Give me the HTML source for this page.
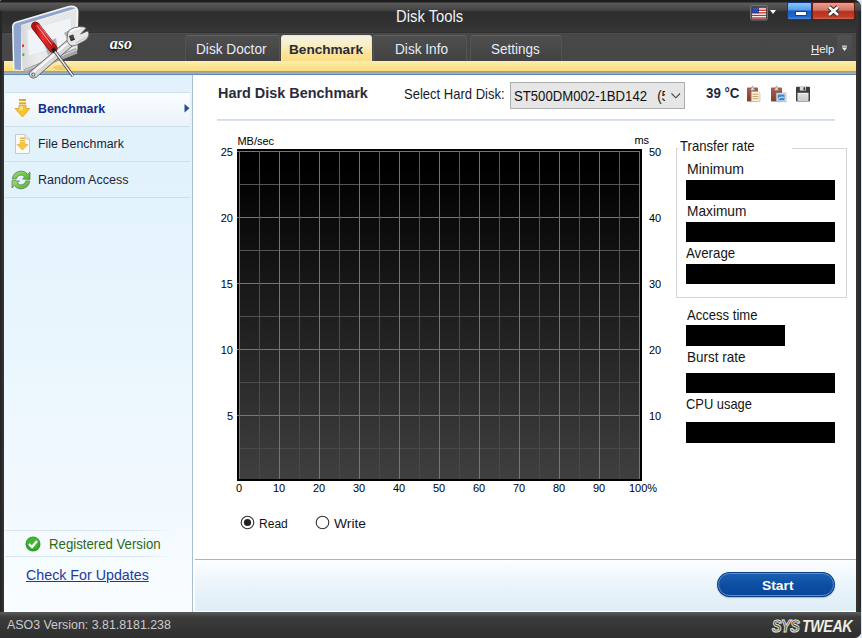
<!DOCTYPE html>
<html><head><meta charset="utf-8">
<style>
*{margin:0;padding:0;box-sizing:border-box}
html,body{width:862px;height:638px;overflow:hidden;background:#dce9f3;font-family:"Liberation Sans",sans-serif}
.a{position:absolute}
.t{position:absolute;white-space:nowrap;line-height:1}
#win{position:absolute;left:0;top:0;width:861px;height:638px;background:#333;border-radius:2px 7px 7px 0;overflow:hidden}
#title{left:0;top:0;width:861px;height:33px;background:linear-gradient(#1e1e1e 0,#1e1e1e 2px,#5a5a5a 3px,#444 10px,#2e2e2e 12px,#2f2f2f 20px,#383838 32px,#2c2c2c 33px)}
#tabrow{left:0;top:33px;width:861px;height:28px;background:linear-gradient(#505050 0,#484848 1px,#464646 28px)}
#yellow{left:4px;top:61px;width:852px;height:10px;background:linear-gradient(#fdeeb0,#f9dc7a)}
#gray{left:4px;top:71px;width:852px;height:3px;background:linear-gradient(#9a9a9a,#b0b0b0)}
#blue{left:4px;top:74px;width:852px;height:1px;background:#5d8cb9}
.tab{position:absolute;top:35px;height:26px;background:linear-gradient(#4f4f4f,#474747 60%,#424242);border:1px solid #535353;border-top-color:#606060;border-bottom:none;border-radius:3px 3px 0 0}
.tab.sel{background:linear-gradient(#f4f1e2,#f8efc8 35%,#fbe5a0 60%,#fadf84);border-color:#efe6c8}
.tabt{color:#e6ecf6;font-size:13.6px}
#side{left:4px;top:75px;width:188px;height:537px;background:linear-gradient(#e2f1fb 0,#e3f3fc 130px,#e8f5fd 250px,#eef8fe 350px,#f4fafe 455px,#fafdff 537px)}
#sideline{left:192px;top:75px;width:1px;height:537px;background:#a6bfd2}
#main{left:193px;top:75px;width:663px;height:537px;background:#fff}
#bottom{left:195px;top:560px;width:661px;height:51px;background:linear-gradient(#fdfeff,#eaf4fa 50%,#deedf7)}
#bline{left:195px;top:559px;width:661px;height:1px;background:#a9b4be}
#status{left:0;top:612px;width:861px;height:26px;background:linear-gradient(#5c5c5c,#3c3c3c 5px,#2e2e2e)}
.sep{position:absolute;left:5px;width:185px;height:1px;background:#cddfeb}
.stext{font-size:12.4px;color:#1f2236}
.lbl{font-size:13.1px;color:#151515}
.blk{position:absolute;background:#000}
.ax{font-size:11px;color:#000}
</style></head><body>
<div id="win">
<div id="title" class="a"></div><div id="tabrow" class="a"></div>
<div class="a" style="left:0;top:11px;width:2px;height:627px;background:#262626"></div><div class="a" style="left:2px;top:61px;width:2px;height:577px;background:#333"></div>
<div class="a" style="left:856px;top:11px;width:5px;height:627px;background:linear-gradient(90deg,#353535,#262626)"></div>
<div id="yellow" class="a"></div><div id="gray" class="a"></div><div id="blue" class="a"></div>
<div class="t" style="left:396.00px;top:8.69px;font-size:15.84px;transform:scaleX(0.9359);transform-origin:0 0;color:#eef2f8">Disk Tools</div>
<div class="tab" style="left:185px;width:95px"></div>
<div class="t" style="left:196.10px;top:42.24px;font-size:14.24px;transform:scaleX(0.9591);transform-origin:0 0;color:#e6ecf6">Disk Doctor</div>
<div class="tab sel" style="left:281px;width:91px"></div>
<div class="t" style="left:288.70px;top:42.53px;font-size:13.66px;transform:scaleX(0.9953);transform-origin:0 0;font-weight:bold;color:#2a2a3a">Benchmark</div>
<div class="tab" style="left:373px;width:94px"></div>
<div class="t" style="left:394.70px;top:42.24px;font-size:14.24px;transform:scaleX(0.9583);transform-origin:0 0;color:#e6ecf6">Disk Info</div>
<div class="tab" style="left:470px;width:92px"></div>
<div class="t" style="left:491.20px;top:42.24px;font-size:14.24px;transform:scaleX(0.9482);transform-origin:0 0;color:#e6ecf6">Settings</div>
<div class="a" style="left:837px;top:35px;width:15px;height:24px;border-radius:3px;background:linear-gradient(#555,#484848);opacity:.7"></div>
<div class="t" style="left:810.50px;top:43.63px;font-size:11.19px;transform:scaleX(1.0164);transform-origin:0 0;color:#f0f0f0"><u>H</u>elp</div>
<svg class="a" style="left:841px;top:45px" width="7" height="7"><rect x="1" y="0.6" width="5" height="1.1" fill="#eee"/><path d="M0.8 2.6 H6.2 L3.5 6 Z" fill="#eee"/></svg>
<svg class="a" style="left:749px;top:4px" width="20" height="17" viewBox="749 4 20 17">
<rect x="750.5" y="5.5" width="17" height="14.5" rx="1.5" fill="#4a4a4a" stroke="#727272"/>
<rect x="752" y="7" width="14" height="11.5" fill="#fff"/>
<rect x="752" y="7" width="14" height="1.3" fill="#d02828"/><rect x="752" y="9.6" width="14" height="1.3" fill="#d02828"/><rect x="752" y="12.2" width="14" height="1.3" fill="#d02828"/><rect x="752" y="14.8" width="14" height="1.3" fill="#d02828"/><rect x="752" y="17.3" width="14" height="1.2" fill="#d02828"/>
<rect x="752" y="7" width="7" height="6.2" fill="#283c90"/>
<path d="M753.5 8.3h.6M755.5 8.3h.6M757.5 8.3h.6M754.5 9.8h.6M756.5 9.8h.6M753.5 11.3h.6M755.5 11.3h.6M757.5 11.3h.6" stroke="#c8d0f0" stroke-width=".6"/>
</svg>
<svg class="a" style="left:770px;top:10px" width="7" height="5"><path d="M0 0H6L3 4Z" fill="#fff"/></svg>
<div class="a" style="left:787px;top:2px;width:25px;height:18px;border:1px solid #0c3a88;border-radius:2px;background:linear-gradient(#8ec4f6,#5aa0ec 40%,#1a5cc0 52%,#1f66c8 85%,#4a8ee0)"></div>
<div class="a" style="left:796px;top:11.5px;width:10px;height:3.5px;background:#fff;box-shadow:0 0 0 .6px #1a2a50"></div>
<div class="a" style="left:812px;top:2px;width:43px;height:18px;border:1px solid #6a1a10;border-radius:2px;background:linear-gradient(#e8a090,#d07464 45%,#b83420 52%,#c03c24 85%,#d06850)"></div>
<svg class="a" style="left:826px;top:5px" width="15" height="12"><path d="M3 2 L12 10 M12 2 L3 10" stroke="#2a2020" stroke-width="4.4"/><path d="M3 2 L12 10 M12 2 L3 10" stroke="#f8f8f8" stroke-width="2.8"/></svg>
<div id="side" class="a"></div><div id="sideline" class="a"></div><div id="main" class="a"></div>
<div id="bline" class="a"></div><div id="bottom" class="a"></div><div id="status" class="a"></div>
<div class="t" style="left:109.8px;top:36.36px;font-size:16px;font-family:'Liberation Serif',serif;font-weight:bold;font-style:italic;color:#fff;text-shadow:0 1px 2px #000">aso</div>
<div class="a" style="left:5px;top:93px;width:185px;height:33px;background:linear-gradient(#fafdff,#f3f9fd 45%,#e9f3fa)"></div>
<div class="sep" style="top:92px"></div>
<div class="sep" style="top:126px"></div>
<div class="sep" style="top:161px"></div>
<div class="sep" style="top:197px"></div>
<div class="t" style="left:37.80px;top:101.88px;font-size:13.37px;transform:scaleX(0.9223);transform-origin:0 0;font-weight:bold;color:#132c8e">Benchmark</div>
<svg class="a" style="left:184px;top:104px" width="6" height="9"><path d="M0.5 0 L5.5 4.2 L0.5 8.5Z" fill="#2d4a86"/></svg>
<div class="t" style="left:37.50px;top:138.30px;font-size:12.65px;transform:scaleX(0.9776);transform-origin:0 0;color:#1f2236">File Benchmark</div>
<div class="t" style="left:37.50px;top:174.20px;font-size:12.65px;transform:scaleX(0.9904);transform-origin:0 0;color:#1f2236">Random Access</div>
<svg class="a" style="left:14px;top:98px" width="17" height="20">
<rect x="5" y="1" width="7" height="2" fill="#e2a72a"/><rect x="5" y="4.3" width="7" height="1.7" fill="#e2a72a"/>
<path d="M5 7 H12 V10.5 H15.8 L8.5 19 L1 10.5 H5 Z" fill="#f6c632" stroke="#dca12a" stroke-width="0.8"/>
<path d="M6 8 H9 V12 L5 12Z" fill="#fde89a" opacity=".7"/>
</svg>
<svg class="a" style="left:15px;top:134px" width="15" height="20">
<path d="M0.5 0.5 H10 L14.5 5 V19.5 H0.5 Z" fill="#fafafa" stroke="#c8c8c8"/>
<path d="M10 0.5 V5 H14.5" fill="#e8e8e8" stroke="#c8c8c8"/>
<rect x="5" y="3.5" width="5" height="1.5" fill="#e6b040"/><rect x="5" y="6" width="5" height="1.4" fill="#e6b040"/>
<path d="M5 8.5 H10 V10.5 H13 L7.5 16 L2 10.5 H5 Z" fill="#f6c840" stroke="#e0a830" stroke-width="0.6"/>
</svg>
<svg class="a" style="left:0;top:160px" width="40" height="35" viewBox="0 160 40 35">
<defs><linearGradient id="grn" x1="0" y1="0" x2="1" y2="1"><stop offset="0" stop-color="#a6e07a"/><stop offset=".5" stop-color="#72cc44"/><stop offset="1" stop-color="#4cb02a"/></linearGradient></defs>
<path d="M12.3 179 A8.7 8.7 0 0 1 27.7 174.4 L30 172 L30 179.5 L22.5 179 L24.7 176.9 A4.8 4.8 0 0 0 16.2 179 Z" fill="url(#grn)" stroke="#5e6e5e" stroke-width=".7"/>
<path d="M29.7 181 A8.7 8.7 0 0 1 14.3 185.6 L12 188 L12 180.5 L19.5 181 L17.3 183.1 A4.8 4.8 0 0 0 25.8 181 Z" fill="url(#grn)" stroke="#5e6e5e" stroke-width=".7"/>
</svg>
<div class="sep" style="top:530px;width:168px;background:linear-gradient(90deg,#d5e6f2,#d5e6f2 80%,rgba(213,230,242,0))"></div><div class="sep" style="top:556px;width:168px;background:linear-gradient(90deg,#d5e6f2,#d5e6f2 80%,rgba(213,230,242,0))"></div>
<svg class="a" style="left:25px;top:536px" width="16" height="16">
<circle cx="8" cy="8" r="7.5" fill="#2ea02a"/><circle cx="8" cy="7" r="6" fill="#52c040" opacity=".6"/>
<path d="M4 8 L7 11 L12 5" stroke="#fff" stroke-width="2.3" fill="none"/></svg>
<div class="t" style="left:48.60px;top:537.32px;font-size:14.39px;transform:scaleX(0.9188);transform-origin:0 0;color:#2c6a12">Registered Version</div>
<div class="t" style="left:26.30px;top:568.43px;font-size:14.97px;transform:scaleX(0.9521);transform-origin:0 0;color:#1b3aa0"><u>Check For Updates</u></div>
<div class="t" style="left:6.50px;top:619.27px;font-size:12.79px;transform:scaleX(0.9690);transform-origin:0 0;color:#cccccc">ASO3 Version: 3.81.8181.238</div>
<div class="t" style="left:772px;top:618.03px;font-size:16.5px;font-weight:bold;font-style:italic;color:#f0ede4;transform:scaleX(0.86);transform-origin:0 0;letter-spacing:-0.4px"><span style="color:#3a3a3a;-webkit-text-stroke:1.1px #e6e2d8">SYS</span><span style="margin-left:3px">TWEAK</span></div>
<div class="t" style="left:217.90px;top:85.29px;font-size:15.19px;transform:scaleX(0.9494);transform-origin:0 0;font-weight:bold;color:#2b2b40">Hard Disk Benchmark</div>
<div class="t" style="left:403.70px;top:87.37px;font-size:14.10px;transform:scaleX(0.9246);transform-origin:0 0;color:#1a1a2a">Select Hard Disk:</div>
<div class="a" style="left:510px;top:82px;width:175px;height:27px;background:#e6e6e6;border:1px solid #adadad;overflow:hidden"></div>
<div class="a" style="left:514px;top:84px;width:151px;height:22px;overflow:hidden"><div class="t" style="left:0.4px;top:4.90px;font-size:14.3px;word-spacing:7px;color:#111;transform:scaleX(0.92);transform-origin:0 0">ST500DM002-1BD142 (5000</div></div>
<svg class="a" style="left:671px;top:93px" width="10" height="6"><path d="M0.5 0.5 L4.8 4.8 L9 0.5" stroke="#444" stroke-width="1.1" fill="none"/></svg>
<div class="a" style="left:217px;top:119px;width:618px;height:2px;background:linear-gradient(#cfd9e4,#dde6ee)"></div>
<div class="t" style="left:705.60px;top:87.09px;font-size:13.95px;transform:scaleX(0.9529);transform-origin:0 0;font-weight:bold;color:#1a2a48">39 °C</div>
<svg class="a" style="left:744px;top:84px" width="70" height="20" viewBox="744 84 70 20">
<defs><linearGradient id="brd" x1="0" y1="0" x2="0" y2="1"><stop offset="0" stop-color="#a8604e"/><stop offset="1" stop-color="#7e3e30"/></linearGradient>
<linearGradient id="flp" x1="0" y1="0" x2="0" y2="1"><stop offset="0" stop-color="#f4f4f4"/><stop offset="1" stop-color="#cfcfcf"/></linearGradient></defs>
<rect x="747" y="87.5" width="11" height="14" rx="0.8" fill="url(#brd)"/>
<path d="M750 90.2 L751.5 88.2 L752.5 85.8 L753.5 88.2 L755 90.2 Z" fill="#e8e8e8" stroke="#777" stroke-width=".5"/>
<path d="M751.3 91.5 H758.2 L760 93.3 V101.6 H751.3 Z" fill="#f7f2dc" stroke="#a8a8a8" stroke-width=".5"/>
<path d="M752.5 94.3H758.5M752.5 96.5H758.5M752.5 98.7H758.5" stroke="#c0a060" stroke-width=".9"/>
<rect x="771" y="87.5" width="11" height="14" rx="0.8" fill="url(#brd)"/>
<path d="M774 90.2 L775.5 88.2 L776.5 85.8 L777.5 88.2 L779 90.2 Z" fill="#e8e8e8" stroke="#777" stroke-width=".5"/>
<rect x="776.2" y="93" width="9.8" height="8.8" fill="#f2f2f2" stroke="#9a9a9a" stroke-width=".6"/>
<rect x="777.6" y="94.4" width="7" height="6" fill="#3d86d0"/>
<path d="M778 99.5 Q780 96 784 97.5" stroke="#bfe0ff" stroke-width="1.2" fill="none"/>
<rect x="796" y="86.8" width="14" height="14.8" rx="1" fill="#3c3c3c"/>
<rect x="799.8" y="86.8" width="6.2" height="3.8" fill="#d8d8d8"/>
<rect x="803.5" y="87.3" width="1.6" height="2.8" fill="#333"/>
<rect x="797.5" y="92.8" width="11" height="8.4" fill="url(#flp)"/>
<path d="M798.5 95H807.5M798.5 97H807.5M798.5 99H807.5" stroke="#b8b8b8" stroke-width=".6"/>
</svg>
<svg class="a" style="left:237px;top:149px" width="405" height="332" viewBox="237 149 405 332" shape-rendering="crispEdges"><defs><linearGradient id="cg" x1="0" y1="0" x2="0" y2="1"><stop offset="0" stop-color="#000"/><stop offset="0.05" stop-color="#000"/><stop offset="1" stop-color="#3f3f3f"/></linearGradient><linearGradient id="mg" gradientUnits="userSpaceOnUse" x1="0" y1="151" x2="0" y2="479"><stop offset="0" stop-color="#5a5a5a"/><stop offset="1" stop-color="#484848"/></linearGradient></defs><rect x="237" y="149" width="405" height="332" fill="#000"/><rect x="239" y="151" width="401" height="328" fill="url(#cg)"/><rect x="237" y="151" width="403" height="1" fill="#757575"/><rect x="239" y="184" width="401" height="1" fill="#565656"/><rect x="237" y="217" width="403" height="1" fill="#757575"/><rect x="239" y="250" width="401" height="1" fill="#535353"/><rect x="237" y="283" width="403" height="1" fill="#757575"/><rect x="239" y="316" width="401" height="1" fill="#505050"/><rect x="237" y="349" width="403" height="1" fill="#757575"/><rect x="239" y="382" width="401" height="1" fill="#4c4c4c"/><rect x="237" y="415" width="403" height="1" fill="#757575"/><rect x="239" y="448" width="401" height="1" fill="#494949"/><rect x="239" y="151" width="1" height="328" fill="#757575"/><rect x="259" y="151" width="1" height="328" fill="url(#mg)"/><rect x="279" y="151" width="1" height="328" fill="#757575"/><rect x="299" y="151" width="1" height="328" fill="url(#mg)"/><rect x="319" y="151" width="1" height="328" fill="#757575"/><rect x="339" y="151" width="1" height="328" fill="url(#mg)"/><rect x="359" y="151" width="1" height="328" fill="#757575"/><rect x="379" y="151" width="1" height="328" fill="url(#mg)"/><rect x="399" y="151" width="1" height="328" fill="#757575"/><rect x="419" y="151" width="1" height="328" fill="url(#mg)"/><rect x="439" y="151" width="1" height="328" fill="#757575"/><rect x="459" y="151" width="1" height="328" fill="url(#mg)"/><rect x="479" y="151" width="1" height="328" fill="#757575"/><rect x="499" y="151" width="1" height="328" fill="url(#mg)"/><rect x="519" y="151" width="1" height="328" fill="#757575"/><rect x="539" y="151" width="1" height="328" fill="url(#mg)"/><rect x="559" y="151" width="1" height="328" fill="#757575"/><rect x="579" y="151" width="1" height="328" fill="url(#mg)"/><rect x="599" y="151" width="1" height="328" fill="#757575"/><rect x="619" y="151" width="1" height="328" fill="url(#mg)"/><rect x="639" y="151" width="1" height="328" fill="#757575"/></svg>
<div class="t" style="left:237.4px;top:135.69px;font-size:11px;color:#000">MB/sec</div>
<div class="t" style="left:634.4px;top:135.44px;font-size:11px;color:#000">ms</div>
<div class="t" style="right:628px;top:146.69px;font-size:11px;color:#000">25</div>
<div class="t" style="left:649px;top:146.69px;font-size:11px;color:#000">50</div>
<div class="t" style="right:628px;top:212.69px;font-size:11px;color:#000">20</div>
<div class="t" style="left:649px;top:212.69px;font-size:11px;color:#000">40</div>
<div class="t" style="right:628px;top:278.69px;font-size:11px;color:#000">15</div>
<div class="t" style="left:649px;top:278.69px;font-size:11px;color:#000">30</div>
<div class="t" style="right:628px;top:344.69px;font-size:11px;color:#000">10</div>
<div class="t" style="left:649px;top:344.69px;font-size:11px;color:#000">20</div>
<div class="t" style="right:628px;top:410.69px;font-size:11px;color:#000">5</div>
<div class="t" style="left:649px;top:410.69px;font-size:11px;color:#000">10</div>
<div class="t" style="left:189px;width:100px;text-align:center;top:482.69px;font-size:11px;color:#000">0</div>
<div class="t" style="left:229px;width:100px;text-align:center;top:482.69px;font-size:11px;color:#000">10</div>
<div class="t" style="left:269px;width:100px;text-align:center;top:482.69px;font-size:11px;color:#000">20</div>
<div class="t" style="left:309px;width:100px;text-align:center;top:482.69px;font-size:11px;color:#000">30</div>
<div class="t" style="left:349px;width:100px;text-align:center;top:482.69px;font-size:11px;color:#000">40</div>
<div class="t" style="left:389px;width:100px;text-align:center;top:482.69px;font-size:11px;color:#000">50</div>
<div class="t" style="left:429px;width:100px;text-align:center;top:482.69px;font-size:11px;color:#000">60</div>
<div class="t" style="left:469px;width:100px;text-align:center;top:482.69px;font-size:11px;color:#000">70</div>
<div class="t" style="left:509px;width:100px;text-align:center;top:482.69px;font-size:11px;color:#000">80</div>
<div class="t" style="left:549px;width:100px;text-align:center;top:482.69px;font-size:11px;color:#000">90</div>
<div class="t" style="left:593px;width:100px;text-align:center;top:482.69px;font-size:11px;color:#000">100%</div>
<svg class="a" style="left:240px;top:515px" width="15" height="15"><circle cx="7.5" cy="7.5" r="6.3" fill="#fff" stroke="#333" stroke-width="1.1"/><circle cx="7.5" cy="7.5" r="3.6" fill="#222"/></svg>
<div class="t" style="left:258.50px;top:516.56px;font-size:13.52px;transform:scaleX(0.8911);transform-origin:0 0;color:#151515">Read</div>
<svg class="a" style="left:315px;top:515px" width="15" height="15"><circle cx="7.5" cy="7.5" r="6.3" fill="#fff" stroke="#333" stroke-width="1.1"/></svg>
<div class="t" style="left:333.70px;top:516.56px;font-size:13.52px;transform:scaleX(1.0226);transform-origin:0 0;color:#151515">Write</div>
<div class="a" style="left:676px;top:148px;width:171px;height:150px;border:1px solid #d5d5d5"></div>
<div class="a" style="left:678px;top:140px;width:114px;height:12px;background:#fff"></div>
<div class="t" style="left:680.00px;top:137.70px;font-size:15.12px;transform:scaleX(0.8678);transform-origin:0 0;color:#151515">Transfer rate</div>
<div class="t" style="left:686.60px;top:162.37px;font-size:14.10px;transform:scaleX(0.9985);transform-origin:0 0;color:#151515">Minimum</div>
<div class="t" style="left:686.60px;top:204.37px;font-size:14.10px;transform:scaleX(0.9721);transform-origin:0 0;color:#151515">Maximum</div>
<div class="t" style="left:686.20px;top:246.37px;font-size:14.10px;transform:scaleX(0.9414);transform-origin:0 0;color:#151515">Average</div>
<div class="blk" style="left:686px;top:180px;width:149px;height:20px"></div>
<div class="blk" style="left:686px;top:222px;width:149px;height:20px"></div>
<div class="blk" style="left:686px;top:264px;width:149px;height:20px"></div>
<div class="t" style="left:686.50px;top:308.27px;font-size:14.10px;transform:scaleX(0.9277);transform-origin:0 0;color:#151515">Access time</div>
<div class="blk" style="left:686px;top:325px;width:99px;height:21px"></div>
<div class="t" style="left:687.10px;top:350.27px;font-size:14.10px;transform:scaleX(0.9572);transform-origin:0 0;color:#151515">Burst rate</div>
<div class="blk" style="left:686px;top:373px;width:149px;height:20px"></div>
<div class="t" style="left:686.20px;top:397.27px;font-size:14.10px;transform:scaleX(0.9140);transform-origin:0 0;color:#151515">CPU usage</div>
<div class="blk" style="left:686px;top:422px;width:149px;height:21px"></div>
<div class="a" style="left:717px;top:572px;width:118px;height:25px;border-radius:13px;background:#0b3f86;box-shadow:0 1px 1px rgba(0,0,0,.25)"></div>
<div class="a" style="left:718px;top:573px;width:116px;height:23px;border-radius:12px;border:1px solid #5b8fd0;background:linear-gradient(#1a5fb4,#0d4fa2 50%,#0a469a)"></div>
<div class="t" style="left:761.50px;top:578.66px;font-size:13.52px;transform:scaleX(1.0230);transform-origin:0 0;font-weight:bold;color:#fff">Start</div>
<svg class="a" style="left:0;top:0" width="100" height="80" viewBox="0 0 100 80">
<defs>
<linearGradient id="face" x1="0" y1="0" x2="1" y2="0"><stop offset="0" stop-color="#d8d8d8"/><stop offset=".3" stop-color="#ececec"/><stop offset="1" stop-color="#e4e4e4"/></linearGradient>
<linearGradient id="red" x1="0" y1="0" x2="1" y2="0"><stop offset="0" stop-color="#b01414"/><stop offset=".4" stop-color="#ee3030"/><stop offset="1" stop-color="#b81818"/></linearGradient>
</defs>
<path d="M12 27 Q12 22.5 16 21.5 L68 6 Q74 4.5 77 7.5 Q78.5 9 78.5 12 L77.5 49 Q77.5 52 74 53 L23 70.5 L14 70.5 Q13 70 13 68 Z" fill="#f4f4f4"/>
<path d="M13.5 27 Q13.5 24 16.5 23 L69 7.5 Q73 6.5 75.5 8.5 L21 25 L21 70 L14.5 69.5 Z" fill="#8ea6cf"/>
<path d="M21 25.5 L76 9.5 L76.5 50 Q76.5 51.5 74 52.5 L22.5 69.5 Z" fill="url(#face)"/>
<path d="M27 30 L71 17.5 L71.5 44 L28.5 56 Z" fill="#f1f4f7" stroke="#dde3ea" stroke-width=".8"/>
<rect x="22" y="44.5" width="2" height="2.5" fill="#e83030"/><rect x="22.3" y="53.3" width="2" height="2.8" fill="#40c030"/>
<path d="M23 69.5 L76 48 L77.5 53.5 L27 73.5 Z" fill="#a4a4a4"/>
<path d="M25 70.5 L76 50" stroke="#d0d0d0" stroke-width="1.2"/>
<path d="M44 44 L56 38 L58 50 L48 55 Z" fill="#8a8a8a" opacity=".6"/>
<ellipse cx="62" cy="67.5" rx="9" ry="2.5" fill="#a08040" opacity=".22"/>
<path d="M31 71 L70 38 Q72 36.5 74 38.5 L75.5 40.5 Q76.5 42.5 74.5 44 L36.5 77 Q33.5 79.5 30.5 77 L29.5 75.5 Q28 73 31 71 Z" fill="#d8d8d8" stroke="#5a5a5a" stroke-width=".9"/>
<path d="M33 72.5 L72 39.5" stroke="#fbfbfb" stroke-width="2.2"/>
<path d="M64 33 L74 27.5 L78 31 L67 38 Z" fill="#9c9c9c" opacity=".8"/>
<path d="M67 41 L67.5 33.5 Q68.5 29.5 73 28.2 L79 26.8 Q83 26.3 85 27.3 L85.8 28.6 L80.6 34 L87 31.2 Q89 30.8 88.8 34.5 Q88.4 38.8 84.2 41 L76.5 45 Q72.5 46.8 70 45.2 Z" fill="#e6e6e6" stroke="#5c5c5c" stroke-width=".8"/>
<path d="M70 31.5 Q74 28.8 80 28.3" stroke="#fff" stroke-width="1.4" fill="none"/>
<path d="M76 43 L86 37.5" stroke="#c4c4c4" stroke-width="1.2"/>
<rect x="69.8" y="35.2" width="4.4" height="5.4" fill="#2a2a2a" transform="rotate(-20 72 38)"/>
<path d="M70.2 37 L74 36M70.5 38.8 L74.2 37.8" stroke="#777" stroke-width=".6"/>
<circle cx="33.3" cy="74.6" r="1.6" fill="#cfe0ee" stroke="#444" stroke-width=".8"/>
<path d="M35.5 26 L53 48.5" stroke="#7a0c0c" stroke-width="8.8" stroke-linecap="round"/>
<path d="M35.5 26 L53 48.5" stroke="url(#red)" stroke-width="7.4" stroke-linecap="round"/>
<path d="M36.8 25.3 L51.5 44.5" stroke="#ffd0d0" stroke-width=".9" opacity=".9"/>
<path d="M39 24.5 L53 42.5" stroke="#ffb0b0" stroke-width=".8" opacity=".8"/>
<path d="M52.5 48.5 L55.5 52" stroke="#1e1e1e" stroke-width="3.8"/>
<path d="M55 51.5 L73 76" stroke="#3e3e3e" stroke-width="3"/>
<path d="M55 51.5 L73 76" stroke="#eeeeee" stroke-width="1.5"/>
</svg>
</div>
</body></html>
